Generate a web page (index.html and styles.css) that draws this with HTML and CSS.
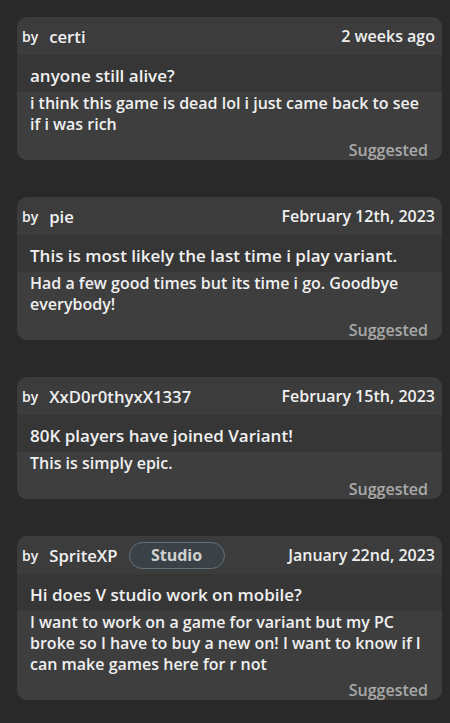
FILE: index.html
```html
<!DOCTYPE html>
<html>
<head>
<meta charset="utf-8">
<link rel="stylesheet" href="styles.css">
</head>
<body>
<div class="list">
  <div class="card">
    <div class="head">
      <span class="by">by</span><span class="name">certi</span>
      <span class="date">2 weeks ago</span>
    </div>
    <div class="title">anyone still alive?</div>
    <div class="body">
      <p class="text">i think this game is dead lol i just came back to see if i was rich</p>
      <div class="sug">Suggested</div>
    </div>
  </div>
  <div class="card">
    <div class="head">
      <span class="by">by</span><span class="name">pie</span>
      <span class="date">February 12th, 2023</span>
    </div>
    <div class="title">This is most likely the last time i play variant.</div>
    <div class="body">
      <p class="text">Had a few good times but its time i go. Goodbye everybody!</p>
      <div class="sug">Suggested</div>
    </div>
  </div>
  <div class="card">
    <div class="head">
      <span class="by">by</span><span class="name">XxD0r0thyxX1337</span>
      <span class="date">February 15th, 2023</span>
    </div>
    <div class="title">80K players have joined Variant!</div>
    <div class="body">
      <p class="text">This is simply epic.</p>
      <div class="sug">Suggested</div>
    </div>
  </div>
  <div class="card">
    <div class="head">
      <span class="by">by</span><span class="name">SpriteXP</span>
      <span class="badge">Studio</span>
      <span class="date">January 22nd, 2023</span>
    </div>
    <div class="title">Hi does V studio work on mobile?</div>
    <div class="body">
      <p class="text">I want to work on a game for variant but my PC broke so I have to buy a new on! I want to know if I can make games here for r not</p>
      <div class="sug">Suggested</div>
    </div>
  </div>
</div>
</body>
</html>
```
FILE: styles.css
```css
html, body {
  margin: 0;
  padding: 0;
  background: #292929;
}
body {
  font-family: "Open Sans", "Lato", sans-serif;
  color: #f0f0f0;
}
.list {
  display: flex;
  flex-direction: column;
  gap: 37px;
  padding: 17px 8px 20px 17px;
}
.card {
  background: #3c3c3c;
  border-radius: 10px;
  overflow: hidden;
}
.head {
  height: 38px;
  display: flex;
  align-items: center;
  padding: 0 7px 0 5px;
}
.by {
  font-size: 14px;
  font-weight: 600;
  margin-right: 11px;
}
.name {
  font-size: 16.7px;
  font-weight: 600;
}
.badge {
  margin-left: 11px;
  height: 25px;
  width: 94px;
  border: 1px solid #65737c;
  background: #3a4247;
  border-radius: 14px;
  display: flex;
  align-items: center;
  justify-content: center;
  font-size: 16px;
  font-weight: 700;
  color: #d0d0d0;
}
.date {
  margin-left: auto;
  font-size: 16px;
  font-weight: 600;
}
.title {
  box-sizing: border-box;
  height: 37px;
  background: #363636;
  display: flex;
  align-items: center;
  padding: 3px 0 0 13px;
  font-size: 17px;
  font-weight: 600;
}
.body {
  background: #3e3e3e;
  padding: 1px 14px 0 13px;
}
.text {
  margin: 0;
  font-size: 16px;
  line-height: 21px;
  font-weight: 600;
}
.sug {
  box-sizing: border-box;
  height: 25px;
  padding-top: 4px;
  line-height: 22px;
  text-align: right;
  font-size: 16px;
  font-weight: 600;
  color: #a9a9a9;
}
```
